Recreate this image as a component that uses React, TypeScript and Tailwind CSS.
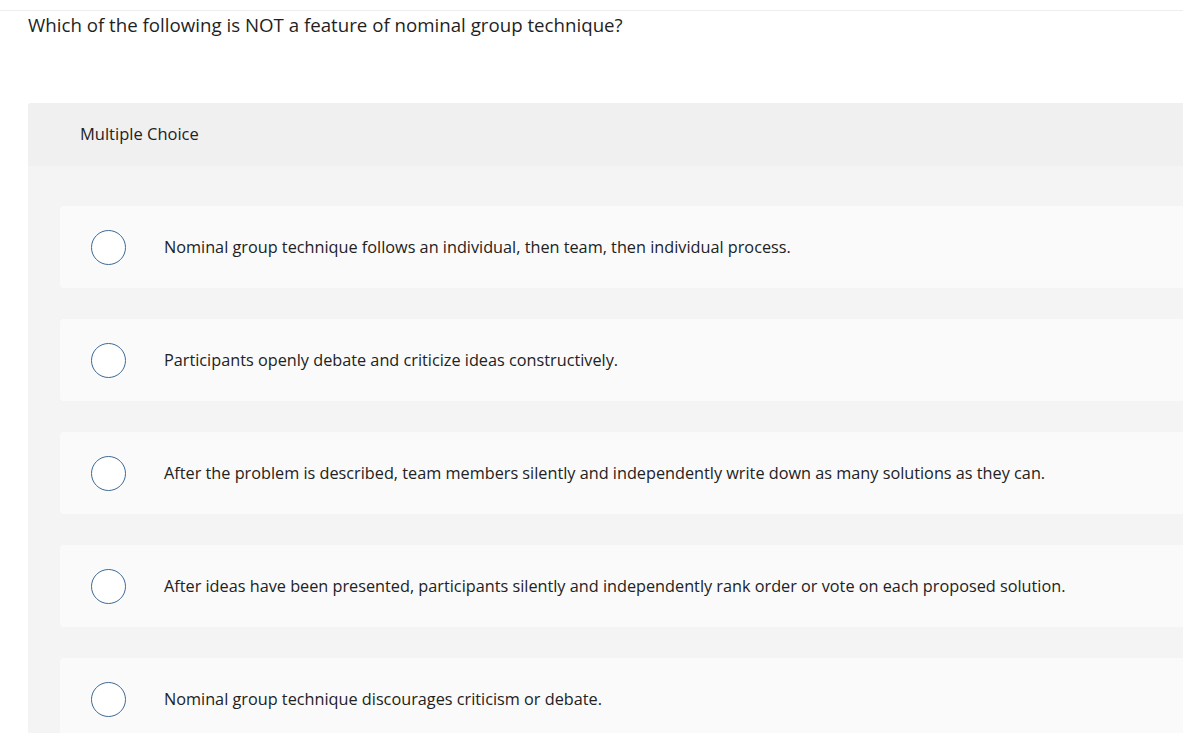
import React from "react";

const options = [
  "Nominal group technique follows an individual, then team, then individual process.",
  "Participants openly debate and criticize ideas constructively.",
  "After the problem is described, team members silently and independently write down as many solutions as they can.",
  "After ideas have been presented, participants silently and independently rank order or vote on each proposed solution.",
  "Nominal group technique discourages criticism or debate.",
];

export default function App() {
  return (
    <div
      className="w-[1183px] h-[747px] bg-white overflow-hidden text-[#1f1f1f]"
      style={{ fontFamily: "'Open Sans', 'Liberation Sans', sans-serif" }}
    >
      <div className="mt-[10px] border-t border-[#eeeeee]" />
      <div className="pl-[28px] pt-[1px] h-[92px] text-[18.7px] leading-[26px]">
        Which of the following is NOT a feature of nominal group technique?
      </div>
      <div className="ml-[28px] h-[630px] rounded-tl-[3px] bg-[#f4f4f4] overflow-hidden">
        <div className="h-[63px] bg-[#f0f0f0] pl-[52px] flex items-center text-[16.5px] text-[#222]">
          Multiple Choice
        </div>
        <div className="pl-[32px] pt-[40px] flex flex-col gap-[31px]">
          {options.map((o) => (
            <div
              key={o}
              className="h-[82px] bg-[#fafafa] rounded-l-[4px] flex items-center pl-[31px]"
            >
              <div className="w-[35px] h-[35px] rounded-full border-[1.5px] border-[#3d6a96] bg-white shrink-0" />
              <div className="ml-[38px] text-[16.25px] text-[#222]">{o}</div>
            </div>
          ))}
        </div>
      </div>
    </div>
  );
}
